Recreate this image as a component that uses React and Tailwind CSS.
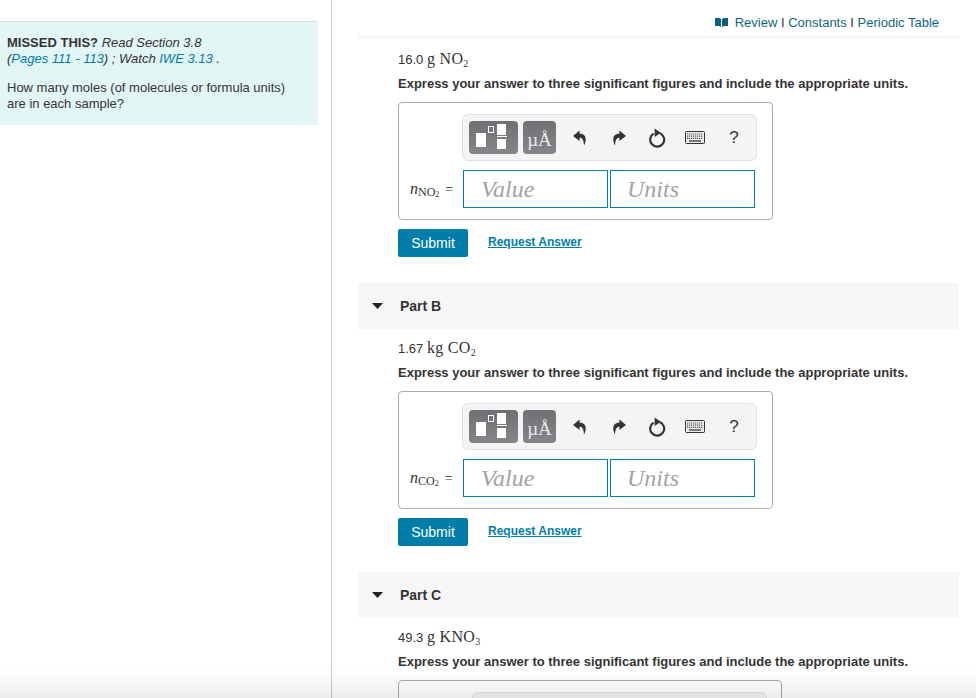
const sans = "font-['Liberation_Sans',Arial,sans-serif]";
const serif = "font-['Liberation_Serif','Times_New_Roman',serif]";

function Formula({ amount, unit, el, sub }) {
  return (
    <p className="h-[22px] flex items-center text-[13px] text-[#333] leading-none">
      <span>{amount}&nbsp;</span>
      <span className={`${serif} text-[16px] tracking-[0.3px]`}>{unit}&nbsp;{el}<span className="text-[10px] relative top-[3px]">{sub}</span></span>
    </p>
  );
}

function Undo({ flip }) {
  return (
    <svg width="14" height="16" viewBox="0 0 14 16" className={flip ? "-scale-x-100" : ""}>
      <path d="M6.6 0.5 L0 6 L6.6 11 V7.8 C9.4 7.8 10.6 9.6 11 15.5 C13.2 12 14.6 3.6 6.6 3.7 Z" fill="#333" />
    </svg>
  );
}

function Toolbar() {
  return (
    <div className="ml-[63px] h-[47px] w-[295px] rounded-[6px] border border-[#e2e2e2] bg-[#f4f4f4] flex items-center pl-[6px]">
      <button className="w-[49px] h-[33px] rounded-[4px] bg-gradient-to-b from-[#706f73] to-[#868589] relative">
        <span className="absolute left-[7px] top-[12px] w-[10px] h-[14px] bg-white" />
        <span className="absolute left-[19px] top-[5px] w-[6px] h-[7px] border border-white" />
        <span className="absolute left-[28px] top-[3px] w-[9px] h-[11px] bg-white" />
        <span className="absolute left-[28px] top-[15px] w-[10px] h-[1px] bg-white" />
        <span className="absolute left-[28px] top-[18px] w-[9px] h-[10px] bg-white" />
      </button>
      <button className={`ml-[5px] w-[33px] h-[33px] rounded-[4px] bg-gradient-to-b from-[#706f73] to-[#868589] text-[#e8e8e8] text-[19px] leading-none ${serif} flex items-center justify-center pt-[3px]`}>µÅ</button>
      <div className="ml-[17px] w-[14px] flex justify-center"><Undo /></div>
      <div className="ml-[25px] w-[14px] flex justify-center"><Undo flip /></div>
      <div className="ml-[22px] w-[18px] flex justify-center">
        <svg width="18" height="20" viewBox="0 0 18 20">
          <path d="M5.6 5.6 A7 7 0 1 0 12 5.2" fill="none" stroke="#333" strokeWidth="2.2" />
          <path d="M6.6 0.6 L12.8 4.8 L6.6 9 Z" fill="#333" />
        </svg>
      </div>
      <div className="ml-[19px] w-[20px] flex justify-center">
        <svg width="20" height="13" viewBox="0 0 20 13">
          <rect x="0.5" y="0.5" width="19" height="12" rx="1" fill="#eee" stroke="#333" />
          <path d="M2 3 H18 M2 5.2 H18 M2 7.4 H18" stroke="#555" strokeWidth="1.2" strokeDasharray="1.2 .8" />
          <path d="M4 10 H16" stroke="#444" strokeWidth="1.4" />
        </svg>
      </div>
      <div className="ml-[24px] w-[10px] text-center text-[17px] text-[#333] leading-none">?</div>
    </div>
  );
}

function AnswerBox({ a }) {
  return (
    <div className="mt-[11px] w-[375px] h-[118px] rounded-[4px] border border-[#acacac] pt-[11px]">
      <Toolbar />
      <div className="mt-[9px] flex items-center">
        <div className={`w-[64px] pl-[11px] text-[#333] ${serif} whitespace-nowrap flex items-baseline`}>
          <i className="text-[16px]">n</i>
          <span className="text-[12px] relative top-[2px]">{a}<span className="text-[8px] relative top-[1px]">2</span></span>
          <span className="ml-[6px] text-[14px]">=</span>
        </div>
        <div className={`w-[145px] h-[38px] border border-[#007ea8] pl-[17px] flex items-center ${serif} italic text-[24px] text-[#a3a3a3]`}>Value</div>
        <div className={`ml-[2px] w-[145px] h-[38px] border border-[#007ea8] pl-[16px] flex items-center ${serif} italic text-[24px] text-[#a3a3a3]`}>Units</div>
      </div>
    </div>
  );
}

function Actions() {
  return (
    <div className="mt-[9px] flex items-center">
      <button className="w-[70px] h-[28px] rounded-[2px] bg-[#007ea8] text-white text-[14px]">Submit</button>
      <a className="ml-[20px] -mt-[2px] text-[12px] font-bold text-[#007ea8] underline">Request Answer</a>
    </div>
  );
}

function PartHeader({ name }) {
  return (
    <div className="h-[46px] bg-[#f7f7f7] flex items-center pl-[14px]">
      <svg width="11" height="6" viewBox="0 0 11 6"><path d="M0 0 H11 L5.5 6 Z" fill="#222" /></svg>
      <span className="ml-[17px] text-[14px] font-bold text-[#333]">{name}</span>
    </div>
  );
}

function Express() {
  return <p className="mt-[6px] h-[15px] leading-[15px] text-[13px] font-bold text-[#333] whitespace-nowrap">Express your answer to three significant figures and include the appropriate units.</p>;
}

function Part({ amount, unit, el, sub, label }) {
  return (
    <div className="pl-[40px]">
      <Formula amount={amount} unit={unit} el={el} sub={sub} />
      <Express />
      <AnswerBox a={label} />
      <Actions />
    </div>
  );
}

export default function App() {
  return (
    <div className={`relative h-[698px] w-[976px] overflow-hidden bg-white flex ${sans}`}>
      <aside className="w-[332px] shrink-0 border-r border-[#c0c6d8] pt-[21px]">
        <div className="w-[318px] h-[104px] border-t border-[#d5dde2] bg-[#e2f6f6] pl-[7px] pt-[13px] text-[13px] leading-[16px] text-[#333]">
          <p><b>MISSED THIS?</b> <i>Read Section 3.8</i></p>
          <p className="italic">(<a className="text-[#007ea8]">Pages 111 - 113</a>) ; Watch <a className="text-[#007ea8]">IWE 3.13</a> .</p>
          <p className="mt-[13px]">How many moles (of molecules or formula units)<br />are in each sample?</p>
        </div>
      </aside>
      <main className="flex-1 pl-[26px] pr-[17px]">
        <div className="h-[35px] pt-[9px] flex items-center justify-end pr-[20px] text-[13px] leading-none text-[#333]">
          <svg width="13" height="9" viewBox="0 0 13 9" className="mr-[7px]"><path d="M0 0 H4 L6 1 V9 L4 8 H0 Z M13 0 H9 L7 1 V9 L9 8 H13 Z" fill="#0b6079" /></svg>
          <a className="text-[#0f6782]">Review</a><span>&nbsp;I&nbsp;</span><a className="text-[#0f6782]">Constants</a><span>&nbsp;I&nbsp;</span><a className="text-[#0f6782]">Periodic Table</a>
        </div>
        <div className="h-[4px] bg-[#f7f7f7]" />
        <div className="mt-[9px]">
          <Part amount="16.0" unit="g" el="NO" sub="2" label="NO" />
        </div>
        <div className="mt-[26px]"><PartHeader name="Part B" /></div>
        <div className="mt-[8px]">
          <Part amount="1.67" unit="kg" el="CO" sub="2" label="CO" />
        </div>
        <div className="mt-[26px]"><PartHeader name="Part C" /></div>
        <div className="mt-[8px] pl-[40px]">
          <Formula amount="49.3" unit="g" el="KNO" sub="3" />
          <Express />
          <div className="mt-[11px] w-[384px] h-[40px] rounded-[4px] border border-[#acacac] pt-[11px]">
            <div className="ml-[73px] w-[295px] h-[47px] rounded-[6px] border border-[#e2e2e2] bg-[#f4f4f4]" />
          </div>
        </div>
      </main>
      <div className="absolute left-0 right-0 bottom-0 h-[30px] bg-gradient-to-b from-transparent to-[#00000012] pointer-events-none" />
    </div>
  );
}
